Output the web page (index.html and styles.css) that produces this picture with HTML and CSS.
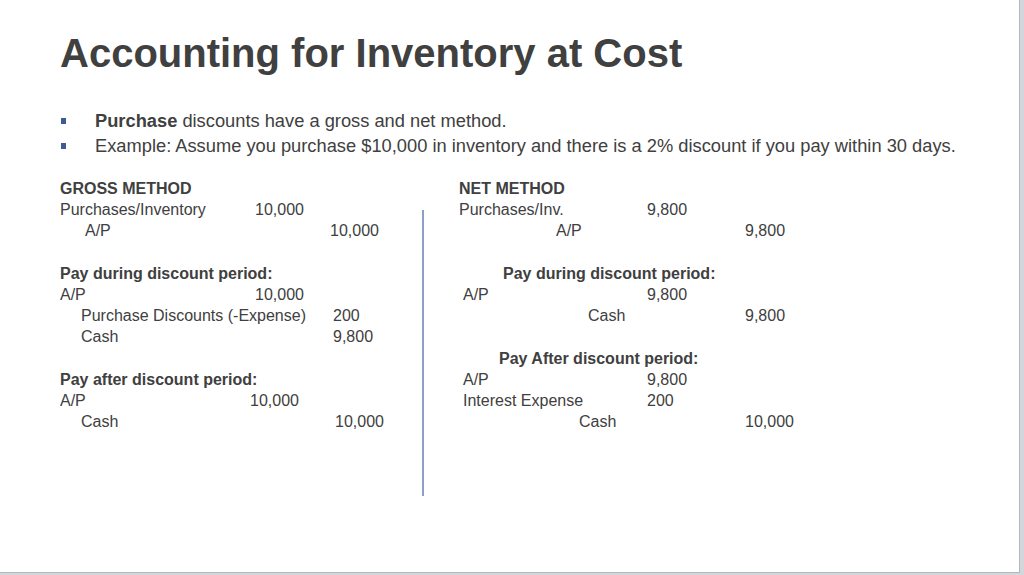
FILE: index.html
```html
<!DOCTYPE html>
<html lang="en">
<head>
<meta charset="utf-8">
<title>Accounting for Inventory at Cost</title>
<link rel="stylesheet" href="styles.css">
</head>
<body>
<div class="slide">
  <h1 class="title">Accounting for Inventory at Cost</h1>
  <ul class="bullets">
    <li><b>Purchase</b> discounts have a gross and net method.</li>
    <li>Example: Assume you purchase $10,000 in inventory and there is a 2% discount if you pay within 30 days.</li>
  </ul>
  <div class="columns">
    <div class="col col-left">
      <div class="row"><span class="head">GROSS METHOD</span></div>
      <div class="row"><span class="lbl">Purchases/Inventory</span><span class="dr">10,000</span><span class="cr"></span></div>
      <div class="row"><span class="lbl in-25">A/P</span><span class="dr"></span><span class="cr sh-m2">10,000</span></div>
      <div class="row blank"></div>
      <div class="row"><span class="head">Pay during discount period:</span></div>
      <div class="row"><span class="lbl">A/P</span><span class="dr">10,000</span><span class="cr"></span></div>
      <div class="row"><span class="lbl in-21">Purchase Discounts (-Expense)</span><span class="dr"></span><span class="cr sh-1">200</span></div>
      <div class="row"><span class="lbl in-21">Cash</span><span class="dr"></span><span class="cr sh-1">9,800</span></div>
      <div class="row blank"></div>
      <div class="row"><span class="head">Pay after discount period:</span></div>
      <div class="row"><span class="lbl">A/P</span><span class="dr sh-m5">10,000</span><span class="cr"></span></div>
      <div class="row"><span class="lbl in-21">Cash</span><span class="dr"></span><span class="cr sh-3">10,000</span></div>
    </div>
    <div class="divider"></div>
    <div class="col col-right">
      <div class="row"><span class="head">NET METHOD</span></div>
      <div class="row"><span class="lbl">Purchases/Inv.</span><span class="dr">9,800</span><span class="cr"></span></div>
      <div class="row"><span class="lbl in-97">A/P</span><span class="dr"></span><span class="cr">9,800</span></div>
      <div class="row blank"></div>
      <div class="row"><span class="head in-44">Pay during discount period:</span></div>
      <div class="row"><span class="lbl in-4">A/P</span><span class="dr">9,800</span><span class="cr"></span></div>
      <div class="row"><span class="lbl in-129">Cash</span><span class="dr"></span><span class="cr">9,800</span></div>
      <div class="row blank"></div>
      <div class="row"><span class="head in-40">Pay After discount period:</span></div>
      <div class="row"><span class="lbl in-4">A/P</span><span class="dr">9,800</span><span class="cr"></span></div>
      <div class="row"><span class="lbl in-4">Interest Expense</span><span class="dr">200</span><span class="cr"></span></div>
      <div class="row"><span class="lbl in-120">Cash</span><span class="dr"></span><span class="cr">10,000</span></div>
    </div>
  </div>
</div>
</body>
</html>
```

FILE: styles.css
```css
* { box-sizing: border-box; }
html, body { margin: 0; padding: 0; }
body {
  background: #d3d6db;
  width: 1024px;
  height: 575px;
  overflow: hidden;
  font-family: "Liberation Sans", Arial, sans-serif;
  color: #404040;
}
.slide {
  width: 1020px;
  height: 573px;
  background: #ffffff;
  border-right: 1px solid #b4b8be;
  border-bottom: 1px solid #b4b8be;
  padding: 29px 0 0 60px;
}
.title {
  margin: 0;
  font-size: 40px;
  line-height: 48px;
  font-weight: bold;
  color: #404040;
}
.bullets {
  list-style: none;
  margin: 31px 0 0 0;
  padding: 0;
}
.bullets li {
  position: relative;
  padding-left: 35px;
  font-size: 18.3px;
  line-height: 25px;
  color: #404040;
  white-space: nowrap;
}
.bullets li::before {
  content: "";
  position: absolute;
  left: 1px;
  top: 10px;
  width: 5px;
  height: 6px;
  background: #3c5c92;
}
.columns {
  display: flex;
  margin-top: 20px;
}
.col {
  display: flex;
  flex-direction: column;
}
.col-left { width: 362px; }
.col-right { padding-left: 35px; }
.divider {
  width: 2px;
  height: 286px;
  margin-top: 32px;
  background: #8d9fc4;
}
.row {
  display: flex;
  height: 21.2px;
  font-size: 16px;
  line-height: 21.2px;
  white-space: nowrap;
}
.head { font-weight: bold; }
.col-left .lbl { width: 195px; }
.col-left .dr { width: 77px; }
.col-right .lbl { width: 188px; }
.col-right .dr { width: 98px; }
.in-4 { padding-left: 4px; }
.in-21 { padding-left: 21px; }
.in-25 { padding-left: 25px; }
.in-40 { padding-left: 40px; }
.in-44 { padding-left: 44px; }
.in-97 { padding-left: 97px; }
.in-120 { padding-left: 120px; }
.in-129 { padding-left: 129px; }
.sh-m2 { margin-left: -2px; }
.sh-m5 { margin-left: -5px; }
.sh-1 { margin-left: 1px; }
.sh-3 { margin-left: 3px; }
```
